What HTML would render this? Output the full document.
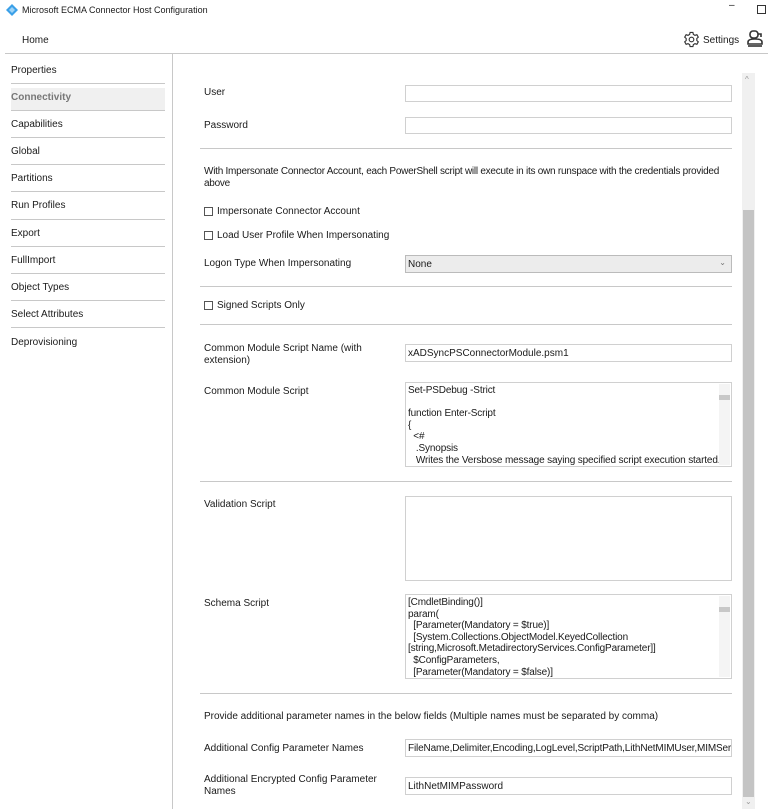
<!DOCTYPE html><html><head><style>
body{margin:0;width:768px;height:809px;background:#fff;font-family:"Liberation Sans",sans-serif;font-size:10px;color:#1a1a1a;position:relative;overflow:hidden}
.a{position:absolute;white-space:nowrap}
.hl{position:absolute;height:1px;background:#c8c8c8}
.in{position:absolute;border:1px solid #d0d0d0;background:#fff;box-sizing:border-box;padding:3px 2px;font-size:10px;overflow:hidden;white-space:nowrap}
.ta{position:absolute;border:1px solid #d0d0d0;box-sizing:border-box;padding:2px 13px 0 2px;font-size:10px;line-height:11.6px;overflow:hidden;white-space:pre;letter-spacing:-0.15px}
.sb{position:absolute;right:1px;top:1px;bottom:1px;width:11px;background:#f4f4f4}
.cb{display:inline-block;width:9px;height:9px;border:1px solid #555;vertical-align:-2px;margin-right:4px;box-sizing:border-box}
.nav{position:absolute;left:11px;width:154px}
</style></head><body>
<svg class="a" style="left:6px;top:4px" width="12" height="12" viewBox="0 0 12 12"><path d="M6 0L12 6L6 12L0 6Z" fill="#3aa0e8"/><path d="M6 3L9 6L6 9L3 6Z" fill="#9fd4f7"/></svg>
<div class="a" style="left:22px;top:5px;font-size:9px">Microsoft ECMA Connector Host Configuration</div>
<div class="a" style="left:729px;top:0px;font-size:10px">–</div>
<div class="a" style="left:757px;top:5px;width:7px;height:7px;border:1px solid #333"></div>
<div class="a" style="left:22px;top:35px">Home</div>
<svg class="a" style="left:683px;top:31px" width="17" height="17" viewBox="0 0 24 24" fill="none" stroke="#333" stroke-width="1.6"><circle cx="12" cy="12" r="3.3"/><path d="M10 2h4l.6 2.8 2.3 1.3 2.7-.9 2 3.5-2.1 1.9v2.8l2.1 1.9-2 3.5-2.7-.9-2.3 1.3L14 22h-4l-.6-2.8-2.3-1.3-2.7.9-2-3.5 2.1-1.9v-2.8L2.4 8.7l2-3.5 2.7.9 2.3-1.3z"/></svg>
<div class="a" style="left:703px;top:35px">Settings</div>
<svg class="a" style="left:746px;top:29px" width="18" height="20" viewBox="0 0 18 20" fill="none" stroke="#333" stroke-width="1.6"><rect x="4" y="2" width="8" height="7" rx="3"/><path d="M12 5h3v3"/><path d="M2 13c0-2 2-3 7-3s7 1 7 3v2H2z"/><path d="M2 17h14"/></svg>
<div class="hl" style="left:5px;top:53px;width:763px"></div>
<div class="a" style="left:172px;top:54px;width:1px;height:755px;background:#c8c8c8"></div>
<div class="a" style="left:11px;top:88px;width:154px;height:22px;background:#f0f0f0"></div>
<div class="nav a" style="top:65px">Properties</div>
<div class="nav a" style="top:92px;color:#777;font-weight:bold">Connectivity</div>
<div class="nav a" style="top:119px">Capabilities</div>
<div class="nav a" style="top:146px">Global</div>
<div class="nav a" style="top:173px">Partitions</div>
<div class="nav a" style="top:200px">Run Profiles</div>
<div class="nav a" style="top:228px">Export</div>
<div class="nav a" style="top:255px">FullImport</div>
<div class="nav a" style="top:282px">Object Types</div>
<div class="nav a" style="top:309px">Select Attributes</div>
<div class="nav a" style="top:337px">Deprovisioning</div>
<div class="hl" style="left:11px;top:83px;width:154px"></div>
<div class="hl" style="left:11px;top:110px;width:154px"></div>
<div class="hl" style="left:11px;top:137px;width:154px"></div>
<div class="hl" style="left:11px;top:164px;width:154px"></div>
<div class="hl" style="left:11px;top:191px;width:154px"></div>
<div class="hl" style="left:11px;top:219px;width:154px"></div>
<div class="hl" style="left:11px;top:246px;width:154px"></div>
<div class="hl" style="left:11px;top:273px;width:154px"></div>
<div class="hl" style="left:11px;top:300px;width:154px"></div>
<div class="hl" style="left:11px;top:327px;width:154px"></div>
<div class="a" style="left:204px;top:87px">User</div>
<div class="in" style="left:405px;top:85px;width:327px;height:17px"></div>
<div class="a" style="left:204px;top:120px">Password</div>
<div class="in" style="left:405px;top:117px;width:327px;height:17px"></div>
<div class="hl" style="left:200px;top:148px;width:532px"></div>
<div class="a" style="left:204px;top:166px;white-space:normal;width:530px;line-height:12px;letter-spacing:-0.25px">With Impersonate Connector Account, each PowerShell script will execute in its own runspace with the credentials provided above</div>
<div class="a" style="left:204px;top:206px"><span class="cb"></span>Impersonate Connector Account</div>
<div class="a" style="left:204px;top:230px"><span class="cb"></span>Load User Profile When Impersonating</div>
<div class="a" style="left:204px;top:258px">Logon Type When Impersonating</div>
<div class="in" style="left:405px;top:255px;width:327px;height:18px;background:#ececec;border-color:#bbb">None<span style="position:absolute;right:5px;top:2px;font-size:8px;color:#777">⌄</span></div>
<div class="hl" style="left:200px;top:286px;width:532px"></div>
<div class="a" style="left:204px;top:300px"><span class="cb"></span>Signed Scripts Only</div>
<div class="hl" style="left:200px;top:324px;width:532px"></div>
<div class="a" style="left:204px;top:343px;line-height:12px">Common Module Script Name (with<br>extension)</div>
<div class="in" style="left:405px;top:344px;width:327px;height:18px">xADSyncPSConnectorModule.psm1</div>
<div class="a" style="left:204px;top:386px">Common Module Script</div>
<div class="ta" style="left:405px;top:382px;width:327px;height:85px">Set-PSDebug -Strict

function Enter-Script
{
  &lt;#
   .Synopsis
   Writes the Versbose message saying specified script execution started.
   .Description<div class="sb"><div style="position:absolute;top:11px;width:11px;height:5px;background:#c8c8c8"></div></div></div>
<div class="hl" style="left:200px;top:481px;width:532px"></div>
<div class="a" style="left:204px;top:499px">Validation Script</div>
<div class="ta" style="left:405px;top:496px;width:327px;height:85px"></div>
<div class="a" style="left:204px;top:598px">Schema Script</div>
<div class="ta" style="left:405px;top:594px;width:327px;height:85px">[CmdletBinding()]
param(
  [Parameter(Mandatory = $true)]
  [System.Collections.ObjectModel.KeyedCollection
[string,Microsoft.MetadirectoryServices.ConfigParameter]]
  $ConfigParameters,
  [Parameter(Mandatory = $false)]
  [Alias("PSCredential")] # To fix usage of the parameter name in the<div class="sb"><div style="position:absolute;top:11px;width:11px;height:5px;background:#c8c8c8"></div></div></div>
<div class="hl" style="left:200px;top:693px;width:532px"></div>
<div class="a" style="left:204px;top:711px">Provide additional parameter names in the below fields (Multiple names must be separated by comma)</div>
<div class="a" style="left:204px;top:743px">Additional Config Parameter Names</div>
<div class="in" style="left:405px;top:739px;width:327px;height:18px;letter-spacing:-0.15px">FileName,Delimiter,Encoding,LogLevel,ScriptPath,LithNetMIMUser,MIMServiceUri</div>
<div class="a" style="left:204px;top:774px;line-height:12px">Additional Encrypted Config Parameter<br>Names</div>
<div class="in" style="left:405px;top:777px;width:327px;height:18px">LithNetMIMPassword</div>
<div class="a" style="left:742px;top:73px;width:13px;height:736px;background:#f0f0f0"></div>
<div class="a" style="left:743px;top:210px;width:11px;height:587px;background:#c4c4c4"></div>
<div class="a" style="left:745px;top:75px;font-size:8px;color:#999">^</div>
<div class="a" style="left:745px;top:797px;font-size:8px;color:#999">⌄</div>
</body></html>
